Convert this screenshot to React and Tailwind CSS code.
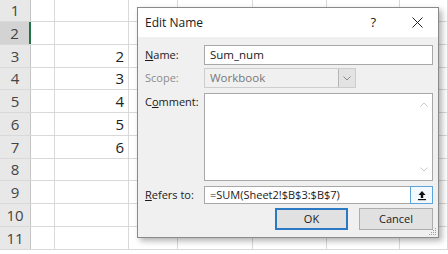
import React from 'react'

const rowHeights = ['h-[22px]', 'h-[23px]', 'h-[23px]', 'h-[22px]', 'h-[23px]', 'h-[23px]', 'h-[23px]', 'h-[22px]', 'h-[23px]', 'h-[23px]', 'h-[23px]']
const values = { 3: 2, 4: 3, 5: 4, 6: 5, 7: 6 }
const colWidths = ['w-[24px]', 'w-[74px]', 'w-[49px]', 'w-[75px]', 'w-[74px]', 'w-[73px]', 'flex-1']

function Sheet() {
  return (
    <div className="flex flex-col bg-white" style={{ fontFamily: '"Open Sans", sans-serif' }}>
      {rowHeights.map((h, i) => {
        const n = i + 1
        const sel = n === 2
        return (
          <div key={n} className={`flex ${h} border-b border-[#d9d9d9]`}>
            <div className={`w-[31px] shrink-0 flex items-center justify-center text-[15px] border-r ${sel ? 'bg-[#d3d3d3] border-r-2 border-[#217346] text-[#3f3f3f]' : 'bg-[#e8e8e8] border-[#c4c4c4] text-[#444]'}`}>
              {n}
            </div>
            {colWidths.map((w, c) => (
              <div key={c} className={`${w} shrink-0 border-r border-[#d9d9d9] flex items-center justify-end pr-[4px] text-[15px] text-[#222]`}>
                {c === 1 && values[n] !== undefined ? values[n] : null}
              </div>
            ))}
          </div>
        )
      })}
    </div>
  )
}

function Dialog() {
  return (
    <div
      className="absolute left-[137px] top-[7px] w-[302px] h-[231px] border border-[#8a8a8a] bg-[#f0f0f0] shadow-[3px_3px_6px_rgba(0,0,0,0.3)] flex flex-col text-[11px] text-[#1a1a1a] whitespace-nowrap"
      style={{ fontFamily: '"Open Sans", "Noto Sans", sans-serif' }}
    >
      <div className="h-[29px] bg-white flex items-center pl-[7px] pr-[15px]">
        <span className="text-[12px] flex-1">Edit Name</span>
        <span className="text-[13px] mr-[36px]">?</span>
        <svg width="11" height="11" viewBox="0 0 11 11" className="text-[#222]">
          <path d="M0.5 0.5 L10.5 10.5 M10.5 0.5 L0.5 10.5" stroke="currentColor" strokeWidth="1" />
        </svg>
      </div>
      <div className="flex flex-col pl-[7px] pr-[5px] pt-[8px]">
        <div className="flex items-center h-[20px]">
          <div className="w-[59px]"><span className="underline">N</span>ame:</div>
          <div className="flex-1 h-full border border-[#a8a8a8] bg-white flex items-center pl-[5px] text-[11.5px]">Sum_num</div>
        </div>
        <div className="flex items-center h-[20px] mt-[3px]">
          <div className="w-[59px] text-[#8c8c8c]">Scope:</div>
          <div className="w-[152px] h-full border border-[#cdcdcd] bg-[#f0f0f0] flex items-center text-[#777] text-[11.5px]">
            <span className="flex-1 pl-[5px]">Workbook</span>
            <div className="w-[17px] h-full border-l border-[#b5b5b5] bg-[#e3e3e3] flex items-center justify-center">
              <svg width="8" height="5" viewBox="0 0 8 5"><path d="M0.5 0.5 L4 4 L7.5 0.5" fill="none" stroke="#888" strokeWidth="1" /></svg>
            </div>
          </div>
        </div>
        <div className="flex h-[88px] mt-[5px]">
          <div className="w-[59px] pt-[1px]">C<span className="underline">o</span>mment:</div>
          <div className="flex-1 h-full border border-[#a8a8a8] bg-white flex justify-end">
            <div className="w-[16px] flex flex-col items-center justify-between py-[8px]">
              <svg width="8" height="5" viewBox="0 0 8 5"><path d="M0.5 4.5 L4 1 L7.5 4.5" fill="none" stroke="#c8c8c8" strokeWidth="1" /></svg>
              <svg width="8" height="5" viewBox="0 0 8 5"><path d="M0.5 0.5 L4 4 L7.5 0.5" fill="none" stroke="#c8c8c8" strokeWidth="1" /></svg>
            </div>
          </div>
        </div>
        <div className="flex items-center h-[18px] mt-[5px]">
          <div className="w-[59px]"><span className="underline">R</span>efers to:</div>
          <div className="flex-1 h-full border border-[#a8a8a8] bg-white flex items-center">
            <span className="flex-1 pl-[5px]">=SUM(Sheet2!$B$3:$B$7)</span>
            <div className="w-[23px] h-[18px] -mr-px border border-[#5ea4dc] bg-[#f4f9fd] flex items-center justify-center">
              <svg width="10" height="11" viewBox="0 0 10 11">
                <path d="M5 1 L1.5 5 H3.8 V8 H6.2 V5 H8.5 Z" fill="#111" />
                <rect x="1" y="9" width="8" height="1.2" fill="#111" />
              </svg>
            </div>
          </div>
        </div>
        <div className="flex justify-end gap-[11px] mt-[4px]">
          <div className="w-[73px] h-[22px] border-2 border-[#2b79c2] bg-[#e1e1e1] flex items-center justify-center">OK</div>
          <div className="w-[74px] h-[22px] border border-[#adadad] bg-[#e1e1e1] flex items-center justify-center">Cancel</div>
        </div>
      </div>
      <svg width="8" height="8" viewBox="0 0 8 8" className="absolute right-[1px] bottom-[1px]">
        <g fill="#a0a0a0">
          <rect x="6" y="0" width="1" height="1" />
          <rect x="4" y="2" width="1" height="1" />
          <rect x="6" y="2" width="1" height="1" />
          <rect x="2" y="4" width="1" height="1" />
          <rect x="4" y="4" width="1" height="1" />
          <rect x="6" y="4" width="1" height="1" />
          <rect x="0" y="6" width="1" height="1" />
          <rect x="2" y="6" width="1" height="1" />
          <rect x="4" y="6" width="1" height="1" />
          <rect x="6" y="6" width="1" height="1" />
        </g>
      </svg>
    </div>
  )
}

export default function App() {
  return (
    <div className="relative w-[448px] h-[254px] overflow-hidden bg-white">
      <Sheet />
      <Dialog />
    </div>
  )
}
